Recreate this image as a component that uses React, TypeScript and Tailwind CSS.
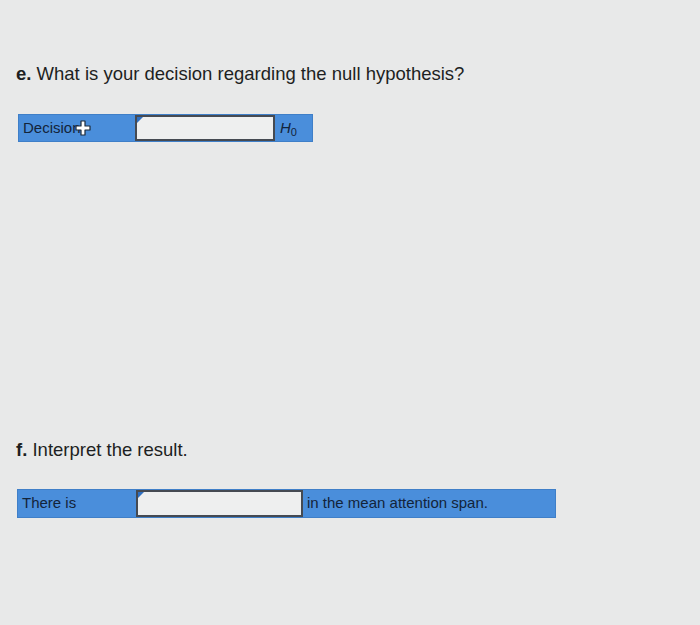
import React from "react";

function MoveCursor() {
  return (
    <svg width="16" height="16" viewBox="0 0 16 16" className="absolute left-[56px] top-[5px]">
      <path
        d="M6 1h4v5h5v4h-5v5H6v-5H1V6h5z"
        fill="#ffffff"
        stroke="#1c2a3a"
        strokeWidth="1.2"
        strokeLinejoin="round"
      />
    </svg>
  );
}

function Blank({ width }: { width: string }) {
  return (
    <div className={`relative h-full ${width} bg-[#eeefef] border-2 border-[#454a52]`}>
      <div className="absolute left-0 top-0 w-0 h-0 border-t-[6px] border-t-[#2f6fc0] border-r-[6px] border-r-transparent" />
    </div>
  );
}

export default function App() {
  return (
    <div
      className="w-[700px] h-[625px] bg-[#e8e9e9] text-[#1d1f22] overflow-hidden"
      style={{ fontFamily: '"Liberation Sans", Arial, sans-serif' }}
    >
      <div className="pt-[62px] pl-[16px]">
        <p className="text-[18.5px] leading-[24px]">
          <span className="font-bold">e.</span> What is your decision regarding the null hypothesis?
        </p>

        <div className="mt-[28px] ml-[2px] flex h-[28px] w-[295px] bg-[#4a8edb] border border-[#3f7fc8] text-[#13243a] text-[15px]">
          <div className="relative w-[116px] flex items-center pl-[4px]">
            Decision
            <MoveCursor />
          </div>
          <Blank width="w-[140px]" />
          <div className="flex-1 flex items-center pl-[5px] italic">
            H<span className="not-italic text-[11px] relative top-[4px]">0</span>
          </div>
        </div>

        <p className="mt-[296px] text-[18.5px] leading-[24px]">
          <span className="font-bold">f.</span> Interpret the result.
        </p>

        <div className="mt-[27px] ml-[1px] flex h-[29px] w-[539px] bg-[#4a8edb] border border-[#3f7fc8] text-[#13243a] text-[15px]">
          <div className="w-[118px] flex items-center pl-[4px]">There is</div>
          <Blank width="w-[167px]" />
          <div className="flex-1 flex items-center pl-[4px]">in the mean attention span.</div>
        </div>
      </div>
    </div>
  );
}
